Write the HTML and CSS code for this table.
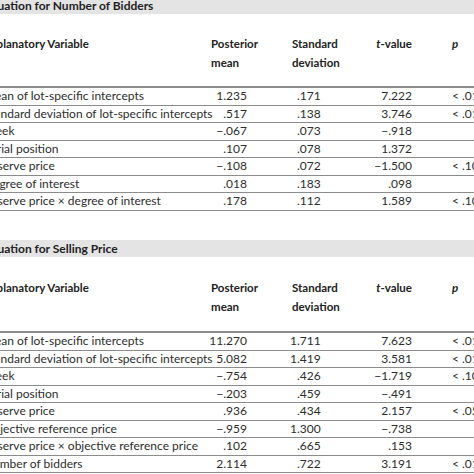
FILE: index.html
```html
<!DOCTYPE html>
<html>
<head>
<meta charset="utf-8">
<link rel="stylesheet" href="styles.css">
</head>
<body>
<div class="page">
  <div class="sheet">
    <section class="block first">
      <div class="band">Equation for Number of Bidders</div>
      <div class="row head">
        <div class="c lab">Explanatory Variable</div>
        <div class="c mean">Posterior<br>mean</div>
        <div class="c sd">Standard<br>deviation</div>
        <div class="c tv"><i>t</i>-value</div>
        <div class="c p"><i>p</i></div>
      </div>
      <div class="row"><div class="c lab">Mean of lot-specific intercepts</div><div class="c mean">1.235</div><div class="c sd"><span class="int"></span>.171</div><div class="c tv">7.222</div><div class="c p">&lt; .01</div></div>
      <div class="row"><div class="c lab">Standard deviation of lot-specific intercepts</div><div class="c mean">.517</div><div class="c sd"><span class="int"></span>.138</div><div class="c tv">3.746</div><div class="c p">&lt; .01</div></div>
      <div class="row"><div class="c lab">Week</div><div class="c mean">−.067</div><div class="c sd"><span class="int"></span>.073</div><div class="c tv">−.918</div><div class="c p"></div></div>
      <div class="row"><div class="c lab">Serial position</div><div class="c mean">.107</div><div class="c sd"><span class="int"></span>.078</div><div class="c tv">1.372</div><div class="c p"></div></div>
      <div class="row"><div class="c lab">Reserve price</div><div class="c mean">−.108</div><div class="c sd"><span class="int"></span>.072</div><div class="c tv">−1.500</div><div class="c p">&lt; .10</div></div>
      <div class="row"><div class="c lab">Degree of interest</div><div class="c mean">.018</div><div class="c sd"><span class="int"></span>.183</div><div class="c tv">.098</div><div class="c p"></div></div>
      <div class="row"><div class="c lab">Reserve price × degree of interest</div><div class="c mean">.178</div><div class="c sd"><span class="int"></span>.112</div><div class="c tv">1.589</div><div class="c p">&lt; .10</div></div>
    </section>
    <section class="block second">
      <div class="band">Equation for Selling Price</div>
      <div class="row head">
        <div class="c lab">Explanatory Variable</div>
        <div class="c mean">Posterior<br>mean</div>
        <div class="c sd">Standard<br>deviation</div>
        <div class="c tv"><i>t</i>-value</div>
        <div class="c p"><i>p</i></div>
      </div>
      <div class="row"><div class="c lab">Mean of lot-specific intercepts</div><div class="c mean">11.270</div><div class="c sd"><span class="int">1</span>.711</div><div class="c tv">7.623</div><div class="c p">&lt; .01</div></div>
      <div class="row"><div class="c lab">Standard deviation of lot-specific intercepts</div><div class="c mean">5.082</div><div class="c sd"><span class="int">1</span>.419</div><div class="c tv">3.581</div><div class="c p">&lt; .01</div></div>
      <div class="row"><div class="c lab">Week</div><div class="c mean">−.754</div><div class="c sd"><span class="int"></span>.426</div><div class="c tv">−1.719</div><div class="c p">&lt; .10</div></div>
      <div class="row"><div class="c lab">Serial position</div><div class="c mean">−.203</div><div class="c sd"><span class="int"></span>.459</div><div class="c tv">−.491</div><div class="c p"></div></div>
      <div class="row"><div class="c lab">Reserve price</div><div class="c mean">.936</div><div class="c sd"><span class="int"></span>.434</div><div class="c tv">2.157</div><div class="c p">&lt; .05</div></div>
      <div class="row"><div class="c lab">Objective reference price</div><div class="c mean">−.959</div><div class="c sd"><span class="int">1</span>.300</div><div class="c tv">−.738</div><div class="c p"></div></div>
      <div class="row"><div class="c lab">Reserve price × objective reference price</div><div class="c mean">.102</div><div class="c sd"><span class="int"></span>.665</div><div class="c tv">.153</div><div class="c p"></div></div>
      <div class="row"><div class="c lab">Number of bidders</div><div class="c mean">2.114</div><div class="c sd"><span class="int"></span>.722</div><div class="c tv">3.191</div><div class="c p">&lt; .01</div></div>
    </section>
  </div>
</div>
</body>
</html>
```
FILE: styles.css
```css
html, body {
  margin: 0;
  padding: 0;
  background: #fff;
}
.page {
  width: 474px;
  height: 474px;
  overflow: hidden;
}
.sheet {
  margin-left: -16px;
  width: 540px;
  font-family: "Lato", "Noto Sans", sans-serif;
  font-size: 12px;
  color: #2d2d2d;
}
.block.first {
  margin-top: -3px;
}
.block.second {
  margin-top: 29px;
}
.band {
  background: #e4e4e4;
  height: 17px;
  line-height: 17px;
  font-weight: bold;
  font-size: 12px;
  color: #222;
  white-space: nowrap;
}
.row {
  display: grid;
  grid-template-columns: 216px 47px 113px 52px 112px;
  height: 16.5px;
  line-height: 16.5px;
  border-bottom: 1px solid #8c8c8c;
  white-space: nowrap;
}
.row.head {
  height: 38px;
  line-height: 19px;
  padding-top: 19.5px;
  padding-bottom: 14.5px;
  border-bottom: 2px solid #8c8c8c;
  font-weight: bold;
  font-size: 11.5px;
  color: #222;
}
.block.second .row.head {
  padding-top: 21px;
  padding-bottom: 15.5px;
}
.c {
  overflow: visible;
}
.mean {
  text-align: right;
}
.head .mean {
  text-align: left;
  padding-left: 11px;
}
.sd {
  padding-left: 43px;
}
.head .sd {
  padding-left: 45px;
}
.int {
  display: inline-block;
  width: 7px;
  text-align: right;
}
.tv {
  text-align: right;
}
.p {
  padding-left: 40px;
}
```
